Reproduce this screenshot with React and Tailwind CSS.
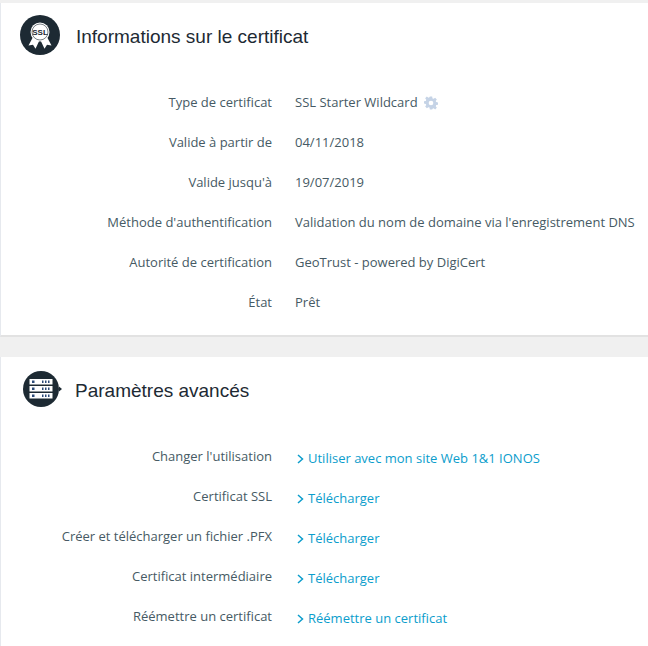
import React from 'react';

const certRows = [
  ['Type de certificat', 'SSL Starter Wildcard'],
  ['Valide à partir de', '04/11/2018'],
  ["Valide jusqu'à", '19/07/2019'],
  ["Méthode d'authentification", "Validation du nom de domaine via l'enregistrement DNS"],
  ['Autorité de certification', 'GeoTrust - powered by DigiCert'],
  ['État', 'Prêt'],
];

const advancedRows = [
  ["Changer l'utilisation", 'Utiliser avec mon site Web 1&1 IONOS'],
  ['Certificat SSL', 'Télécharger'],
  ['Créer et télécharger un fichier .PFX', 'Télécharger'],
  ['Certificat intermédiaire', 'Télécharger'],
  ['Réémettre un certificat', 'Réémettre un certificat'],
];

const SslIcon = () => (
  <svg width="42" height="42" viewBox="0 0 42 42" className="shrink-0">
    <circle cx="21" cy="21" r="20" fill="#1d2a33" />
    <path d="M14 23l-4.500 8.500 4.500-.8 2.500 4 4-8.500zM28 23l4.500 8.500-4.500-.8-2.500 4-4-8.500z" fill="#fff" />
    <circle cx="21" cy="18" r="9.500" fill="#fff" />
    <circle cx="21" cy="18" r="8" fill="none" stroke="#1d2a33" strokeWidth=".6" />
    <text x="21" y="20.800" textAnchor="middle" className="font-['Liberation_Sans',sans-serif] text-[8px] font-bold" fill="#1d2a33">SSL</text>
  </svg>
);

const ServerIcon = () => (
  <svg width="42" height="40" viewBox="0 0 42 40" className="shrink-0">
    <circle cx="19" cy="20" r="18" fill="#1d2a33" />
    <path d="M37 17.500l3 2.500-3 2.500z" fill="#1d2a33" />
    {[10, 17, 24].map((y) => (
      <g key={y}>
        <rect x="7.500" y={y} width="23" height="5.500" fill="#fff" />
        <rect x="10" y={y + 1.500} width="2.500" height="2.500" fill="#2b4a78" />
        <rect x="20" y={y + 1.500} width="1.500" height="2.500" fill="#2b4a78" />
        <rect x="23" y={y + 1.500} width="1.500" height="2.500" fill="#2b4a78" />
        <rect x="26" y={y + 1.500} width="1.500" height="2.500" fill="#2b4a78" />
      </g>
    ))}
  </svg>
);

const Gear = () => (
  <svg width="14" height="14" viewBox="0 0 24 24" className="ml-[6px] shrink-0" fill="#c5d3e6">
    <path fillRule="evenodd" d="M10 1h4l.6 3.100 1.900.8L19.100 3l2.900 2.900-1.900 2.600.8 1.900 3.100.6v4l-3.100.6-.8 1.900 1.900 2.600-2.900 2.900-2.600-1.900-1.900.8L14 23h-4l-.6-3.100-1.900-.8L4.900 21 2 18.100l1.900-2.600-.8-1.900L0 13V9l3.100-.6.8-1.900L2 3.900 4.900 1l2.600 1.900 1.900-.8zM12 8a4 4 0 100 8 4 4 0 000-8z" />
  </svg>
);

const Chevron = () => (
  <svg width="7" height="10" viewBox="0 0 7 10" className="ml-[2px] mr-[4px] shrink-0" fill="none" stroke="#0b9dcc" strokeWidth="1.500">
    <path d="M1 1l4.500 4L1 9" />
  </svg>
);

export default function App() {
  return (
    <div className="w-[648px] h-[646px] overflow-hidden bg-[#f0f0f0] pt-[3px] font-['Open_Sans',sans-serif] text-[13px] text-[#465a64]">
      <section className="h-[334px] bg-white border-l border-l-[#e6e9ee] border-b-2 border-b-[#e2e2e2]">
        <header className="flex items-center h-[64px] pl-[18px]">
          <SslIcon />
          <h2 className="ml-[15px] mt-[5px] font-['Liberation_Sans',sans-serif] text-[19px] text-[#1d2a33]">Informations sur le certificat</h2>
        </header>
        <dl className="pt-[16px]">
          {certRows.map(([label, value], i) => (
            <div key={label} className="flex items-center h-[40px]">
              <dt className="w-[271px] text-right">{label}</dt>
              <dd className="ml-[23px] flex items-center whitespace-nowrap">
                {value}
                {i === 0 && <Gear />}
              </dd>
            </div>
          ))}
        </dl>
      </section>
      <section className="mt-[20px] h-[300px] bg-white border-l border-l-[#e6e9ee]">
        <header className="flex items-center h-[64px] pl-[21px]">
          <ServerIcon />
          <h2 className="ml-[11px] mt-[5px] font-['Liberation_Sans',sans-serif] text-[19px] text-[#1d2a33]">Paramètres avancés</h2>
        </header>
        <dl className="pt-[18px]">
          {advancedRows.map(([label, value]) => (
            <div key={label} className="flex items-center h-[40px]">
              <dt className="w-[271px] text-right -mt-[4px]">{label}</dt>
              <dd className="ml-[23px] flex items-center whitespace-nowrap text-[#0b9dcc]">
                <Chevron />
                {value}
              </dd>
            </div>
          ))}
        </dl>
      </section>
    </div>
  );
}
